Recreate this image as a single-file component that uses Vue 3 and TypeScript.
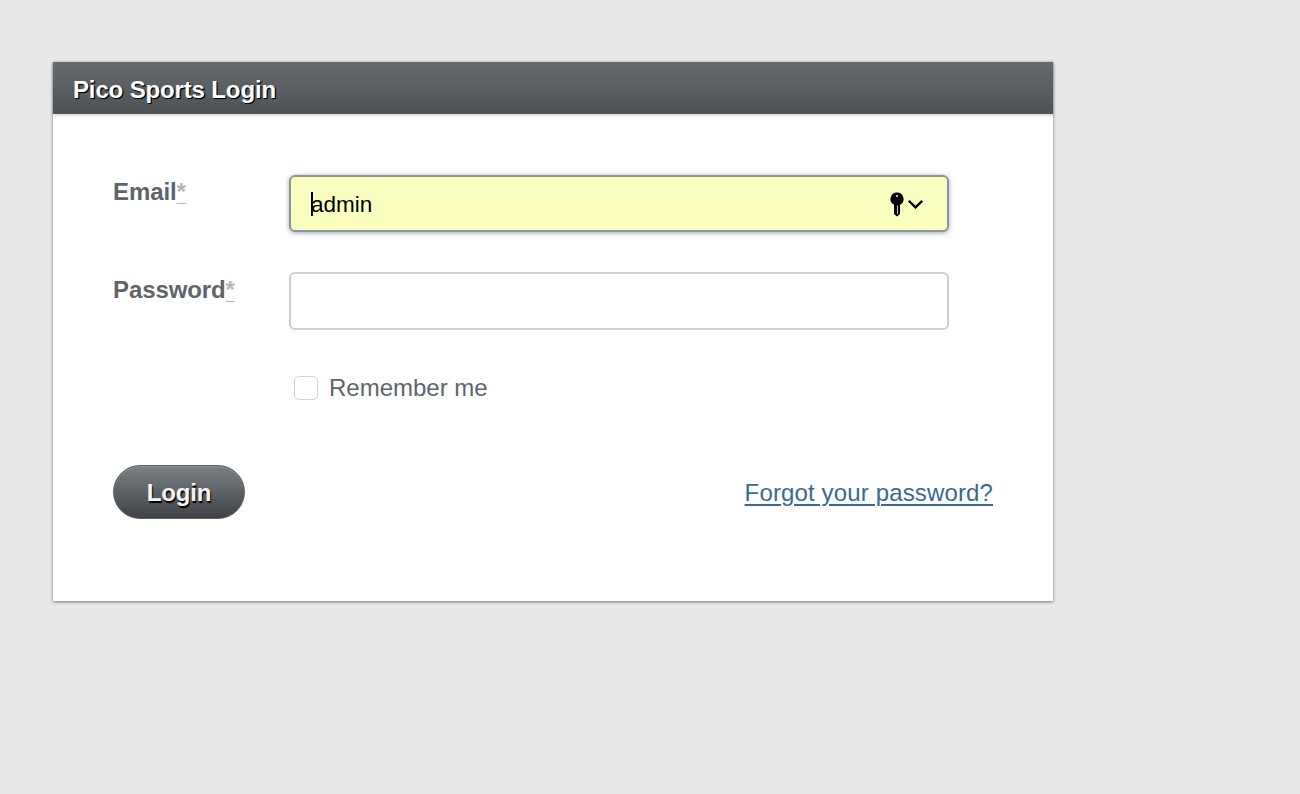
<script setup lang="ts">
import { ref } from 'vue'
const email = ref('admin')
const password = ref('')
const remember = ref(false)
</script>

<template>
  <div class="page">
    <section class="card">
      <header class="card-head">Pico Sports Login</header>
      <form class="card-body" @submit.prevent>
        <div class="row">
          <label class="label" for="email">Email<abbr class="req">*</abbr></label>
          <div class="field autofill">
            <input id="email" v-model="email" class="input" type="text" />
            <span class="caret"></span>
            <span class="fill-icons">
              <svg class="key" width="14" height="25" viewBox="0 0 14 25">
                <path fill="#000" fill-rule="evenodd" d="M7 .5a6.5 6.5 0 0 1 3 12.27V22l-3 2.5L4 22v-9.23A6.5 6.5 0 0 1 7 .5Zm0 2.6a1 1 0 1 0 0 2 1 1 0 0 0 0-2Z" />
                <path fill="#faffbf" d="M7.2 13.6h.8v7.9l-.8.7Z" />
              </svg>
              <svg class="chev" width="15" height="9" viewBox="0 0 15 9">
                <path fill="none" stroke="#000" stroke-width="2.3" d="M.8.8 7.5 7.4 14.2.8" />
              </svg>
            </span>
          </div>
        </div>
        <div class="row">
          <label class="label" for="password">Password<abbr class="req">*</abbr></label>
          <div class="field pw-field">
            <input id="password" v-model="password" class="input" type="password" />
          </div>
        </div>
        <label class="remember">
          <input v-model="remember" class="check" type="checkbox" />
          <span>Remember me</span>
        </label>
        <div class="actions">
          <button class="login" type="submit">Login</button>
          <a class="forgot" href="#" @click.prevent>Forgot your password?</a>
        </div>
      </form>
    </section>
  </div>
</template>

<style>
html, body { margin: 0; background: #e7e8ea; }
</style>

<style scoped>
.page {
  min-height: 794px;
  box-sizing: border-box;
  padding: 62px 0 0 53px;
  background: #e7e8ea;
  font-family: "Liberation Sans", Arial, sans-serif;
  color: #5e656b;
}
.card {
  width: 1000px;
  height: 539px;
  background: #fff;
  box-shadow: 0 1px 3px rgba(0, 0, 0, 0.5);
}
.card-head {
  height: 52px;
  box-sizing: border-box;
  padding-left: 20px;
  line-height: 55px;
  font-size: 24px;
  font-weight: 700;
  letter-spacing: -0.14px;
  color: #fff;
  text-shadow: 1px 1px 1px #000, 1px 1px 0 #000;
  background: linear-gradient(#666b70, #4d5256);
  box-shadow: 0 1px 3px rgba(0, 0, 0, 0.22);
}
.card-body {
  padding: 61px 60px 0;
}
.row {
  display: flex;
  align-items: flex-start;
  height: 58px;
  margin-bottom: 40px;
}
.label {
  width: 176px;
  flex: none;
  font-size: 24px;
  font-weight: 700;
  line-height: 34px;
  letter-spacing: -0.1px;
}
.req {
  color: #b3b5b7;
  text-decoration: underline;
  text-underline-offset: 3px;
  text-decoration-thickness: 1px;
  font-weight: 700;
}
.field {
  position: relative;
  width: 660px;
  height: 58px;
}
.pw-field {
  margin-top: -1px;
}
.input {
  width: 100%;
  height: 100%;
  box-sizing: border-box;
  padding: 3px 20px 0;
  border: 2px solid #c8cfd5;
  border-radius: 6px;
  outline: none;
  background: #fff;
  font-family: inherit;
  font-size: 22.5px;
  color: #000;
}
.autofill {
  height: 57px;
}
.autofill .input {
  background: #faffbf;
  border-color: #8e949b;
  box-shadow: 0 1px 5px rgba(70, 80, 100, 0.5);
}
.caret {
  position: absolute;
  left: 22px;
  top: 17px;
  width: 2px;
  height: 24px;
  background: #000;
}
.fill-icons {
  position: absolute;
  right: 26px;
  top: 16.5px;
  display: flex;
  align-items: flex-start;
  gap: 4px;
}
.key { display: block; }
.chev { display: block; margin-top: 8px; }
.remember {
  display: flex;
  align-items: center;
  gap: 11px;
  margin: 45px 0 0 181px;
  height: 24px;
  font-size: 24px;
}
.check {
  appearance: none;
  width: 24px;
  height: 24px;
  margin: 0;
  flex: none;
  box-sizing: border-box;
  border: 1px solid #d0d2d4;
  border-radius: 5px;
  background: #fff;
}
.actions {
  display: flex;
  align-items: center;
  justify-content: space-between;
  width: 880px;
  margin-top: 65px;
}
.login {
  width: 132px;
  height: 54px;
  padding: 1px 0 0;
  border: 1px solid #5a5f64;
  border-radius: 27px;
  background: linear-gradient(#7b8085, #3f4347);
  box-shadow: inset 0 1px 1px rgba(255, 255, 255, 0.15);
  color: #f4f4f4;
  font-family: inherit;
  font-size: 24px;
  font-weight: 700;
  letter-spacing: -0.2px;
  text-shadow: 1px 2px 1px #000;
}
.forgot {
  margin-top: 2px;
  color: #396a92;
  font-size: 24px;
  letter-spacing: 0.14px;
  text-decoration: underline;
  text-underline-offset: 3px;
  text-decoration-thickness: 2px;
}
</style>
